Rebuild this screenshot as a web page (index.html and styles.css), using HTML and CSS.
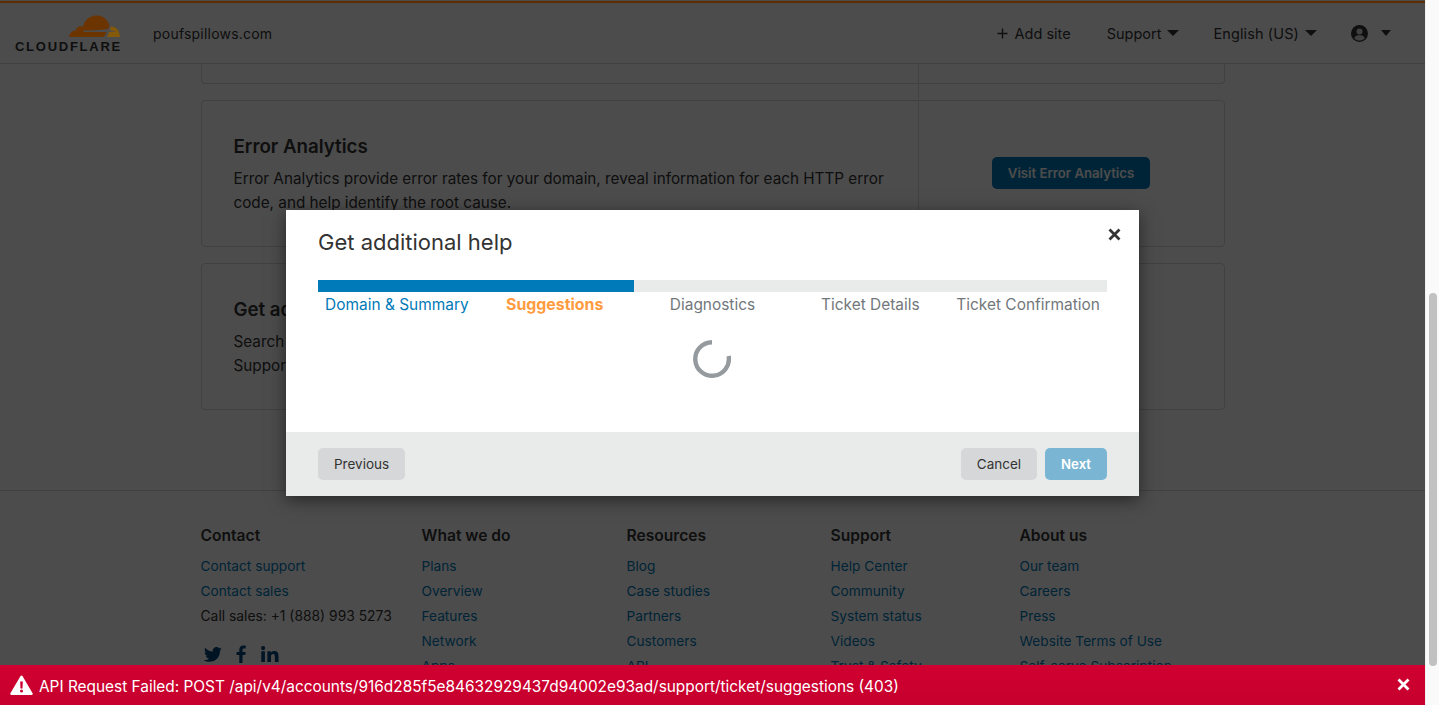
FILE: index.html
```html
<!DOCTYPE html>
<html lang="en">
<head>
<meta charset="utf-8">
<title>Cloudflare - Get additional help</title>
<link rel="stylesheet" href="styles.css">
</head>
<body>
<div class="window">
  <div class="page">
    <div class="stripe"></div>
    <header class="topbar">
      <a class="logo">
        <svg class="logo-cloud" width="52" height="23" viewBox="0 0 52 23">
          <path class="cloud-main" d="M0 22 C0.5 18.5 2.5 16 6.5 15.5 C7.5 11.5 11 10.5 14 11.5 C16 4 22 0 28.5 0.5 C35 1 39.5 5.5 40.5 11.5 L39 14 C30 15.5 22 15.5 14.5 15.5 L14.5 17 L37.5 17 C37 19 36 21 34.5 22 Z"/>
          <path class="cloud-wing" d="M41.5 11.5 C46.5 11 50.5 15 51 22 L38 22 C38.8 20.5 39.5 19 40 17 L47.5 16.5 L40.5 15 C41 14 41.5 13 41.5 11.5 Z"/>
        </svg>
        <span class="logo-word">CLOUDFLARE</span>
      </a>
      <span class="domain">poufspillows.com</span>
      <nav class="topnav">
        <a class="nav-item nav-add"><svg class="plus" width="11" height="11" viewBox="0 0 11 11"><path d="M5.5 0.5v10M0.5 5.5h10"/></svg>Add site</a>
        <a class="nav-item nav-support">Support<i class="caret"></i></a>
        <a class="nav-item nav-lang">English (US)<i class="caret"></i></a>
        <a class="nav-item nav-user">
          <svg class="user" width="17" height="17" viewBox="0 0 17 17"><circle cx="8.5" cy="8.5" r="8.5"/><circle class="user-cut" cx="8.5" cy="6.6" r="3"/><path class="user-cut" d="M3.2 13.2 C4.2 10.8 6 10.3 8.5 10.3 C11 10.3 12.8 10.8 13.8 13.2 C12.4 14.7 10.6 15.5 8.5 15.5 C6.4 15.5 4.6 14.7 3.2 13.2 Z"/></svg>
          <i class="caret"></i>
        </a>
      </nav>
    </header>

    <main class="content">
      <section class="card card-clipped">
        <div class="card-main"></div>
        <div class="card-side"></div>
      </section>
      <section class="card">
        <div class="card-main">
          <h3 class="card-title">Error Analytics</h3>
          <p class="card-text">Error Analytics provide error rates for your domain, reveal information for each HTTP error code, and help identify the root cause.</p>
        </div>
        <div class="card-side"><a class="btn-visit">Visit Error Analytics</a></div>
      </section>
      <section class="card">
        <div class="card-main">
          <h3 class="card-title">Get additional help</h3>
          <p class="card-text">Search our knowledge base, ask the community, or contact Cloudflare<br>Support for further assistance with this issue.</p>
        </div>
        <div class="card-side"></div>
      </section>
    </main>

    <footer class="footer">
      <div class="footer-grid">
        <div class="fcol">
          <h4>Contact</h4>
          <a>Contact support</a>
          <a>Contact sales</a>
          <span>Call sales: +1 (888) 993 5273</span>
          <div class="socials">
            <svg width="18" height="15" viewBox="0 0 18 15"><path d="M18 1.8c-.7.3-1.4.5-2.1.6.8-.5 1.3-1.2 1.6-2-.7.4-1.5.7-2.3.9C14.500.5 13.500 0 12.400 0 10.400 0 8.700 1.700 8.700 3.700c0 .3 0 .6.100.8C5.700 4.400 3 2.900 1.200.7.900 1.200.700 1.900.700 2.600c0 1.300.600 2.400 1.600 3.100-.6 0-1.200-.2-1.700-.5 0 1.800 1.300 3.300 3 3.700-.3.100-.6.100-1 .1-.2 0-.5 0-.7-.1.500 1.500 1.800 2.600 3.400 2.600-1.300 1-2.900 1.600-4.600 1.600-.3 0-.6 0-.9 0 1.600 1 3.600 1.700 5.700 1.700 6.800 0 10.500-5.700 10.500-10.600v-.5c.7-.5 1.300-1.200 1.800-1.900z"/></svg>
            <svg width="10" height="18" viewBox="0 0 10 18"><path d="M6.500 18V10h2.700l.4-3.100H6.500V4.900c0-.9.300-1.500 1.600-1.500h1.600V.6C9.400.500 8.500.400 7.400.400 5 .4 3.300 1.900 3.300 4.600v2.300H.6V10h2.700v8z"/></svg>
            <svg width="18" height="16" viewBox="0 0 18 16"><circle cx="2.100" cy="2.100" r="2.100"/><path d="M.3 5.300h3.600V16H.3zM6.400 5.300h3.400v1.500c.5-.9 1.700-1.800 3.400-1.800 3.600 0 4.300 2.300 4.300 5.400V16h-3.600v-5c0-1.300 0-2.900-1.800-2.900s-2.100 1.400-2.100 2.800V16H6.400z"/></svg>
          </div>
        </div>
        <div class="fcol">
          <h4>What we do</h4>
          <a>Plans</a><a>Overview</a><a>Features</a><a>Network</a><a>Apps</a>
        </div>
        <div class="fcol">
          <h4>Resources</h4>
          <a>Blog</a><a>Case studies</a><a>Partners</a><a>Customers</a><a>API</a>
        </div>
        <div class="fcol">
          <h4>Support</h4>
          <a>Help Center</a><a>Community</a><a>System status</a><a>Videos</a><a>Trust &amp; Safety</a>
        </div>
        <div class="fcol">
          <h4>About us</h4>
          <a>Our team</a><a>Careers</a><a>Press</a><a>Website Terms of Use</a><a>Self-serve Subscription</a>
        </div>
      </div>
    </footer>

    <div class="overlay"></div>

    <div class="modal">
      <div class="modal-body">
        <h2 class="modal-title">Get additional help</h2>
        <svg class="modal-close" width="13" height="13" viewBox="0 0 13 13"><path d="M1.500 1.500l10 10M11.500 1.500l-10 10"/></svg>
        <div class="progress"><div class="progress-fill"></div></div>
        <ol class="steps">
          <li class="step step-done">Domain &amp; Summary</li>
          <li class="step step-active">Suggestions</li>
          <li class="step">Diagnostics</li>
          <li class="step">Ticket Details</li>
          <li class="step">Ticket Confirmation</li>
        </ol>
        <div class="spinner-wrap">
          <svg class="spinner" width="38" height="38" viewBox="0 0 38 38"><path d="M19 2.200A16.800 16.800 0 1 0 35.600 16"/></svg>
        </div>
      </div>
      <div class="modal-footer">
        <button class="btn btn-grey">Previous</button>
        <span class="spacer"></span>
        <button class="btn btn-grey">Cancel</button>
        <button class="btn btn-next">Next</button>
      </div>
    </div>

    <div class="alert">
      <svg class="alert-icon" width="23" height="20" viewBox="0 0 23 20"><path fill-rule="evenodd" d="M11.500 0.500c.5 0 .8.200 1.100.7l10 17c.5.800 0 1.800-1 1.800H1.400c-1 0-1.500-1-1-1.800l10-17c.3-.5.600-.7 1.100-.7zM10.200 6.500l.3 7h2l.3-7zM11.500 14.500a1.500 1.500 0 1 0 0 3 1.500 1.500 0 0 0 0-3z"/></svg>
      <span class="alert-text">API Request Failed: POST /api/v4/accounts/916d285f5e84632929437d94002e93ad/support/ticket/suggestions (403)</span>
      <svg class="alert-close" width="13" height="13" viewBox="0 0 13 13"><path d="M1.500 1.500l10 10M11.500 1.500l-10 10"/></svg>
    </div>
  </div>
  <div class="scrollbar"><div class="thumb"></div></div>
</div>
</body>
</html>
```
FILE: styles.css
```css
* { box-sizing: border-box; }
html, body { margin: 0; padding: 0; height: 100%; overflow: hidden; }
body { font-family: Inter, "Liberation Sans", sans-serif; color: #333; background: #fff; }
h2, h3, h4, p, ol { margin: 0; padding: 0; }

.window { display: flex; height: 705px; }
.page { position: relative; width: 1425px; height: 705px; overflow: hidden; background: #fff; }

.stripe { position: relative; z-index: 2; height: 2px; margin-top: 1px; background: #5c2e00; }

.topbar {
  display: flex; align-items: center; height: 61px;
  padding: 0 0 0 15px; border-bottom: 1px solid #d9d9d9; font-size: 14.5px;
}
.logo { display: flex; flex-direction: column; align-items: flex-end; width: 106px; margin-top: 1px; }
.logo-cloud { position: relative; z-index: 2; display: block; }
.cloud-main { fill: #6b3400; }
.cloud-wing { fill: #85590a; }
.logo-word {
  margin-top: 3px; font-family: "Liberation Sans", Arial, sans-serif; font-weight: 700;
  font-size: 13px; line-height: 12px; letter-spacing: 1.75px; margin-right: -1px; color: #333; white-space: nowrap;
}
.domain { margin-left: 32px; color: #333; font-size: 14px; letter-spacing: .015em; }
.topnav { display: flex; align-items: center; margin-left: auto; padding-right: 34px; }
.nav-item { display: flex; align-items: center; color: #333; white-space: nowrap; }
.nav-add { margin-right: 36px; }
.nav-support { margin-right: 34px; }
.nav-lang { margin-right: 34px; letter-spacing: .008em; }
.plus { margin-right: 7px; }
.plus path { stroke: #333; stroke-width: 1.4; fill: none; }
.caret {
  display: inline-block; margin-left: 6px; width: 0; height: 0;
  border-left: 6px solid transparent; border-right: 6px solid transparent; border-top: 6px solid #333;
}
.nav-user .caret { margin-left: 13px; border-left-width: 5.500px; border-right-width: 5.500px; }
.user circle { fill: #333; }
.user .user-cut { fill: #d9d9d9; }

.content { width: 1024px; margin: 0 auto; display: flex; flex-direction: column; gap: 16px; }
.card {
  display: flex; height: 147px; border: 1px solid #d9d9d9; border-radius: 4px;
}
.card-clipped { height: 20px; border-top: 0; border-radius: 0 0 4px 4px; }
.card-main { width: 717px; padding: 34px 32px 0 32px; border-right: 1px solid #d9d9d9; }
.card-side { flex: 1; display: flex; align-items: center; justify-content: center; }
.card-title { font-size: 18.700px; line-height: 24px; font-weight: 600; color: #333; margin-bottom: 8px; }
.card-text { font-size: 15.270px; line-height: 24px; color: #333; }
.btn-visit {
  display: block; height: 32px; line-height: 32px; padding: 0 16px; border-radius: 5px;
  background: #007ab8; color: #fff; font-size: 13.200px; font-weight: 600; margin-top: -1px;
}

.footer { margin-top: 80px; border-top: 1px solid #d9d9d9; padding-top: 34px; }
.footer-grid {
  display: grid; grid-template-columns: 221px 205px 204px 189px 1fr;
  width: 1024px; margin: 0 auto; font-size: 13.700px;
}
.fcol { display: flex; flex-direction: column; }
.fcol h4 { font-size: 15.600px; line-height: 22px; font-weight: 600; color: #333; margin-bottom: 7px; }
.fcol a, .fcol span { display: block; height: 25px; line-height: 25px; white-space: nowrap; }
.fcol a { color: #007ab8; }
.fcol span { color: #333; font-size: 13.850px; }
.socials { display: flex; align-items: center; gap: 14px; margin-top: 16px; padding-left: 3px; }
.socials svg { display: block; fill: #00457a; }
.socials svg:last-child { margin-left: 1px; }

.overlay { position: absolute; inset: 0; z-index: 1; background: rgba(0, 0, 0, .7); }

.modal {
  position: absolute; z-index: 3; left: 286px; top: 210px; width: 853px; height: 286px;
  background: #fff; display: flex; flex-direction: column;
  box-shadow: 0 4px 16px rgba(0, 0, 0, .5);
}
.modal-body { position: relative; flex: 1; padding: 0 32px; }
.modal-title { font-size: 22px; line-height: 32px; font-weight: 400; color: #333; padding-top: 16px; height: 70px; box-sizing: border-box; }
.modal-close { position: absolute; top: 18px; right: 18px; }
.modal-close path { stroke: #333; stroke-width: 2.800; fill: none; }
.progress { height: 12px; background: #e9ebeb; }
.progress-fill { width: 40%; height: 100%; background: #007ab8; }
.steps { display: grid; grid-template-columns: repeat(5, 1fr); list-style: none; margin-top: 2px; }
.step { text-align: center; font-size: 15.450px; line-height: 22px; color: #72777b; white-space: nowrap; }
.step-done { color: #007ab8; }
.step-active { color: #ff9c40; font-weight: 700; font-size: 15.900px; }
.spinner-wrap { display: flex; justify-content: center; margin-top: 24px; padding-right: 2px; }
.spinner { display: block; }
.spinner path { fill: none; stroke: #949a9e; stroke-width: 4.400; }
.modal-footer {
  display: flex; align-items: center; gap: 8px; height: 64px; padding: 0 32px; background: #e9ebeb;
}
.spacer { flex: 1; }
.btn {
  height: 32px; padding: 0 16px; border: 0; border-radius: 5px; font-family: inherit; font-size: 13.500px;
}
.btn-grey { background: #d5d7d8; color: #333; }
.btn-next { background: #7ab6d4; color: #fff; font-weight: 600; font-size: 13.200px; }

.alert {
  position: absolute; z-index: 3; left: 0; right: 0; bottom: 0; height: 40px;
  display: flex; align-items: center; padding: 0 15px 0 10px;
  background: linear-gradient(#d00030, #c6002e); color: #fff;
}
.alert-icon { fill: #fff; margin-right: 6px; }
.alert-text { font-size: 15.400px; white-space: nowrap; padding-top: 2px; }
.alert-close { margin-left: auto; margin-top: -2px; }
.alert-close path { stroke: #fff; stroke-width: 2.800; fill: none; }

.scrollbar { width: 14px; height: 705px; padding: 293px 2px 0 4px; background: #fafafa; border-left: 1px solid #f0f0f0; }
.thumb { height: 373px; width: 8px; margin-left: -1px; border-radius: 4px; background: #c1c1c1; }
```
